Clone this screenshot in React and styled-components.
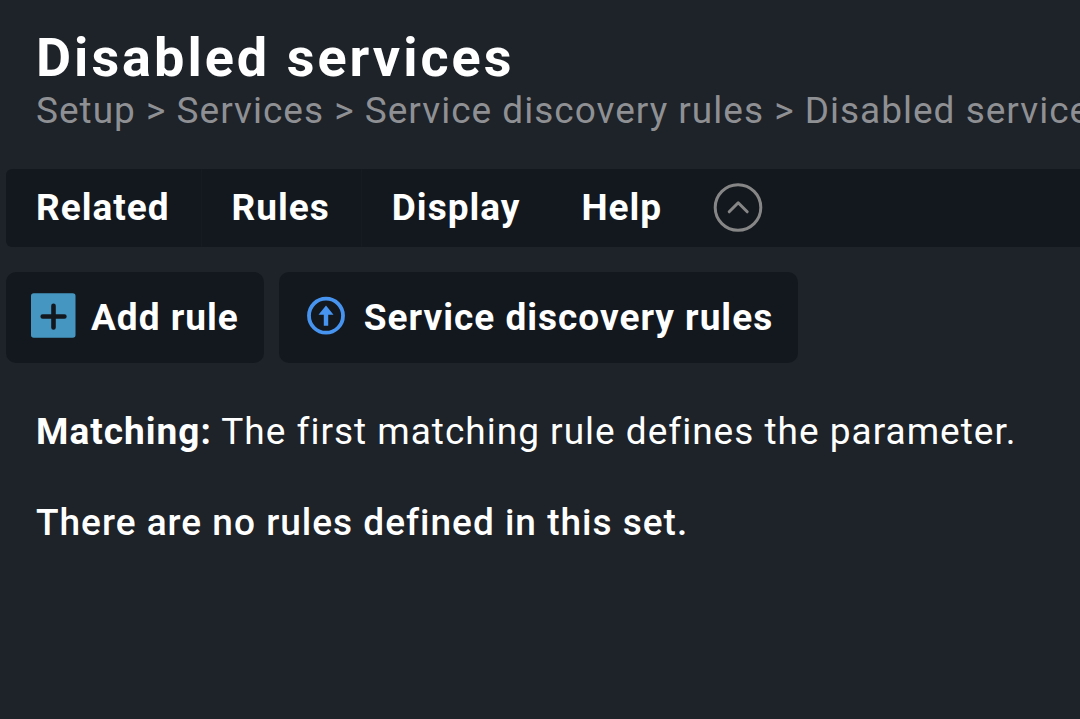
import React from 'react';
import styled, { createGlobalStyle } from 'styled-components';

const Global = createGlobalStyle`
  * { box-sizing: border-box; }
  body {
    margin: 0;
    background: #1e2229;
    color: #fff;
    font-family: Roboto, sans-serif;
    font-size: 37px;
    line-height: 44px;
    letter-spacing: 1px;
  }
`;

const Page = styled.div`
  min-height: 100vh;
  padding: 27px 0 0 6px;
  overflow: hidden;
`;

const Header = styled.header`
  padding-left: 30px;
`;

const Title = styled.h1`
  margin: 0;
  font-size: 54px;
  line-height: 62px;
  font-weight: 700;
  letter-spacing: 3px;
`;

const Breadcrumb = styled.nav`
  color: #8e9093;
  white-space: nowrap;
`;

const Crumb = styled.a`
  color: inherit;
  text-decoration: none;
`;

const MenuBar = styled.nav`
  display: flex;
  align-items: center;
  height: 78px;
  margin-top: 36px;
  background: #13181e;
  border-radius: 6px 0 0 6px;
`;

const MenuButton = styled.button`
  height: 78px;
  padding: 0 31px 0 30px;
  border: 0;
  border-right: ${(p) => (p.$divided ? '1px solid #161b21' : '0')};
  background: none;
  color: inherit;
  font: inherit;
  font-weight: 700;
  letter-spacing: inherit;
`;

const CollapseButton = styled.button`
  display: flex;
  margin-left: 20px;
  padding: 0;
  border: 0;
  background: none;
`;

const Actions = styled.div`
  display: flex;
  gap: 15px;
  margin-top: 25px;
`;

const ActionButton = styled.button`
  display: flex;
  align-items: center;
  gap: 15px;
  height: 91px;
  padding: 0 25px;
  border: 0;
  border-radius: 10px;
  background: #13181e;
  color: inherit;
  font: inherit;
  font-weight: 700;
  letter-spacing: inherit;
  white-space: nowrap;
`;

const ActionIcon = styled.svg`
  width: 45px;
  height: 45px;
  overflow: visible;
`;

const Content = styled.main`
  padding: 47px 30px 0;
`;

const Paragraph = styled.p`
  margin: 0 0 47px;
`;

const Strong = styled.b`
  font-weight: 700;
`;

const Notice = styled(Paragraph)`
  font-weight: 500;
`;

export default function App() {
  return (
    <Page>
      <Global />
      <Header>
        <Title>Disabled services</Title>
        <Breadcrumb aria-label="Breadcrumb">
          <Crumb href="#setup">Setup</Crumb> &gt; <Crumb href="#services">Services</Crumb> &gt;{' '}
          <Crumb href="#discovery">Service discovery rules</Crumb> &gt;{' '}
          <Crumb href="#disabled">Disabled services</Crumb>
        </Breadcrumb>
      </Header>
      <MenuBar>
        <MenuButton $divided>Related</MenuButton>
        <MenuButton $divided>Rules</MenuButton>
        <MenuButton>Display</MenuButton>
        <MenuButton>Help</MenuButton>
        <CollapseButton aria-label="Collapse">
          <svg width="50" height="50" viewBox="0 0 50 50" fill="none" stroke="#868686" strokeWidth="3">
            <circle cx="25" cy="24.5" r="22.8" />
            <path d="M16.2 28.800 25.200 19.800 34.200 28.800" strokeLinecap="round" strokeLinejoin="round" />
          </svg>
        </CollapseButton>
      </MenuBar>
      <Actions>
        <ActionButton>
          <ActionIcon viewBox="0 0 45 45">
            <rect y="-1.700" width="44.500" height="44.500" rx="2.800" fill="#4596c1" />
            <path d="M22.500 10.700v21.700M11.700 21.500h21.700" stroke="#13181e" strokeWidth="4.600" strokeLinecap="round" />
          </ActionIcon>
          Add rule
        </ActionButton>
        <ActionButton>
          <ActionIcon viewBox="0 0 45 45">
            <circle cx="22" cy="20.700" r="17" fill="none" stroke="#4794f0" strokeWidth="3.800" />
            <path d="M22 10.400l7.500 9.300h-5.300v11h-4.400v-11h-5.300z" fill="#4794f0" />
          </ActionIcon>
          Service discovery rules
        </ActionButton>
      </Actions>
      <Content>
        <Paragraph><Strong>Matching:</Strong> The first matching rule defines the parameter.</Paragraph>
        <Notice>There are no rules defined in this set.</Notice>
      </Content>
    </Page>
  );
}
